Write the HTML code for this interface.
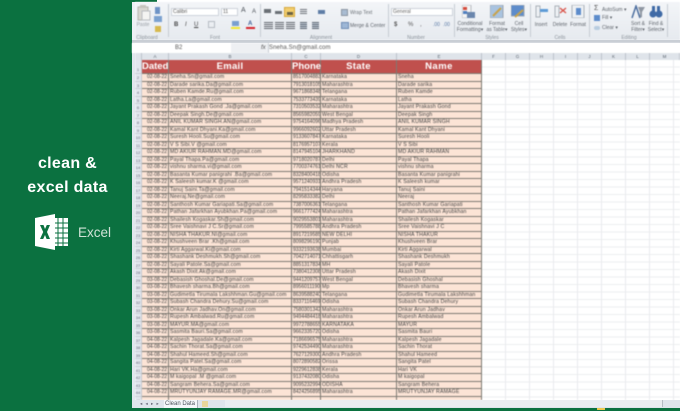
<!DOCTYPE html>
<html><head><meta charset="utf-8"><style>
html,body{margin:0;padding:0;background:#fff}
body{width:680px;height:411px;position:relative;overflow:hidden;font-family:"Liberation Sans",sans-serif}
.a{position:absolute;white-space:nowrap}
#left{left:0;top:0;width:132px;height:411px;background:#0b7140}
#rib{left:135px;top:2px;width:545px;height:38px;background:linear-gradient(#f3f5f8,#e6eaef);filter:blur(.4px)}
.t{position:absolute;white-space:nowrap;font-size:5px;color:#5f656c;line-height:6px}
.c{transform:translateX(-50%);text-align:center}
.g{color:#8d949c;font-size:5px;top:33px}
.sp{position:absolute;top:2px;height:33px;width:1px;background:#c6ccd3}
.ic{position:absolute}
.box{position:absolute;background:#fff;border:1px solid #cdd3da;box-sizing:border-box}
#sheet{left:135px;top:53px;width:545px;height:347px;filter:blur(.4px);overflow:hidden;background:#fff}
.r{position:absolute;left:0;width:545px;height:7.5px;font-size:5.2px;line-height:7px;color:#444;letter-spacing:.15px}
.r span{position:absolute;top:0;height:7.5px;white-space:nowrap;overflow:hidden;background:#fce4d6;box-sizing:border-box;border-right:1px solid #7d7a72;border-bottom:1px solid #7d7a72;padding-left:1px}
.r .n{left:0;width:7px;background:#e2e7ee;border-right:1px solid #c3c9d0;border-bottom:1px solid #c9ced5;color:#667;text-align:center;padding:0;font-size:4px;letter-spacing:0}
.r .d{left:7px;width:27px;text-align:right;padding:0 1px 0 0;font-size:5px;letter-spacing:0}
.r .e{left:34px;width:123px}
.r .p{left:157px;width:29px;font-size:5px;letter-spacing:0}
.r .s{left:186px;width:76px}
.r .m{left:262px;width:85px}
#grid{left:347px;top:7px;width:198px;height:340px;background:repeating-linear-gradient(90deg,transparent 0 23px,#e9ebee 23px 24px),repeating-linear-gradient(180deg,transparent 0 6.5px,#eceef0 6.5px 7.5px)}
.ch{position:absolute;top:0;height:7px;background:#dfe4ea;border-right:1px solid #bcc3cb;box-sizing:border-box;font-size:4.5px;color:#5c6670;text-align:center;line-height:7px}
.hd{position:absolute;top:7px;height:14px;background:#c0504d;color:#fff;font-weight:bold;font-size:9.5px;line-height:13px;text-align:center;box-sizing:border-box;border-right:1px solid #7d7a72;border-bottom:1px solid #7d7a72}
</style></head><body>

<div class="a" id="left"></div>
<div class="a" style="left:0;top:152px;width:135px;text-align:center;color:#fff;font-weight:bold;font-size:16px;line-height:24px;letter-spacing:.3px">clean &amp;<br>excel data</div>
<svg class="a" style="left:34px;top:213px" width="36" height="38" viewBox="0 0 36 38">
<path d="M1 5 L21 1 V37 L1 33 Z" fill="#fff"/>
<rect x="21" y="5" width="13" height="28" fill="#fff"/>
<path d="M24 5V33M29 5V33M21 10H34M21 15H34M21 20H34M21 25H34M21 30H34" stroke="#0b7140" stroke-width="1"/>
<path d="M6 12 H9.5 L11 16 L12.8 12 H16 L13 19 L16 26 H12.6 L11 22 L9.2 26 H6 L9.2 19 Z" fill="#0b7140"/>
</svg>
<div class="a" style="left:78px;top:223px;color:#cfe2d6;font-size:13.5px;line-height:20px">Excel</div>
<div class="a" style="left:132px;top:0;width:25px;height:2px;background:#0b7140"></div>
<div class="a" style="left:132px;top:2px;width:3px;height:51px;background:#eef1f5"></div>
<div class="a" style="left:132px;top:53px;width:3px;height:347px;background:#e2e7ee"></div>
<div class="a" style="left:132px;top:400px;width:3px;height:8px;background:#dfe5ec"></div>
<div class="a" style="left:132px;top:408px;width:548px;height:3px;background:#0b7140"></div>

<div class="a" id="rib">
<!-- clipboard -->
<svg class="ic" style="left:2px;top:3px" width="14" height="16"><rect x="1" y="2" width="10" height="13" fill="#d9d8d2" stroke="#b5b5ae"/><rect x="5" y="6" width="8" height="9" fill="#f4f4f2" stroke="#b9bcc0"/><rect x="3" y="0" width="6" height="3" fill="#c5c4bd"/></svg>
<div class="t c" style="left:8px;top:20px;color:#9aa0a6">Paste</div>
<div class="ic" style="left:20px;top:5px;width:5px;height:7px;background:#6d93c6"></div>
<div class="ic" style="left:19px;top:14px;width:8px;height:6px;background:#7ba1d0"></div>
<div class="ic" style="left:20px;top:24px;width:6px;height:6px;background:#d7b94e"></div>
<div class="t g c" style="left:12px">Clipboard</div>
<div class="sp" style="left:33px"></div>
<!-- font -->
<div class="box" style="left:36px;top:6px;width:48px;height:8px"></div>
<div class="t" style="left:38px;top:7px;color:#555">Calibri</div>
<div class="box" style="left:86px;top:6px;width:17px;height:8px"></div>
<div class="t" style="left:88px;top:7px;color:#555">11</div>
<div class="t" style="left:106px;top:6px;font-size:7px;color:#4b5058">A</div>
<div class="t" style="left:117px;top:7px;font-size:6px;color:#4b5058">A</div>
<div class="t" style="left:39px;top:20px;font-weight:bold;font-size:6px;color:#444">B</div>
<div class="t" style="left:50px;top:20px;font-style:italic;font-size:6px;color:#444">I</div>
<div class="t" style="left:59px;top:20px;text-decoration:underline;font-size:6px;color:#444">U</div>
<div class="ic" style="left:73px;top:19px;width:7px;height:7px;border:1px solid #b6bcc3;box-sizing:border-box"></div>
<div class="ic" style="left:97px;top:19px;width:7px;height:5px;background:#7b9fcf"></div>
<div class="ic" style="left:96px;top:25px;width:9px;height:2px;background:#f2e632"></div>
<div class="t" style="left:113px;top:19px;font-size:6px;font-weight:bold;color:#3b5c95">A</div>
<div class="ic" style="left:111px;top:25px;width:9px;height:2px;background:#d6232a"></div>
<div class="t g c" style="left:80px">Font</div>
<div class="sp" style="left:125px"></div>
<!-- alignment -->
<div class="ic" style="left:129px;top:7px;width:7px;height:4px;background:#6b7076"></div>
<div class="ic" style="left:140px;top:9px;width:7px;height:3px;background:#6b7076"></div>
<div class="ic" style="left:149px;top:5px;width:11px;height:10px;background:#f3ce6d;border:1px solid #d6a83c;box-sizing:border-box"></div>
<div class="ic" style="left:152px;top:10px;width:6px;height:3px;background:#6b6242"></div>
<div class="ic" style="left:165px;top:7px;width:7px;height:6px;background:repeating-linear-gradient(180deg,#70757c 0 1px,transparent 1px 2px)"></div>
<div class="ic" style="left:183px;top:8px;width:7px;height:4px;background:#5f7da6"></div>
<div class="ic" style="left:129px;top:20px;width:9px;height:7px;background:repeating-linear-gradient(180deg,#62676e 0 1px,transparent 1px 2px)"></div>
<div class="ic" style="left:140px;top:20px;width:9px;height:7px;background:repeating-linear-gradient(180deg,#62676e 0 1px,transparent 1px 2px)"></div>
<div class="ic" style="left:151px;top:20px;width:9px;height:7px;background:repeating-linear-gradient(180deg,#62676e 0 1px,transparent 1px 2px)"></div>
<div class="ic" style="left:165px;top:20px;width:7px;height:7px;background:repeating-linear-gradient(180deg,#5e6772 0 1px,#c6d1dd 1px 2px)"></div>
<div class="ic" style="left:177px;top:20px;width:7px;height:7px;background:repeating-linear-gradient(180deg,#5e6772 0 1px,#c6d1dd 1px 2px)"></div>
<div class="ic" style="left:206px;top:7px;width:7px;height:7px;background:#a9bcd2;border:1px solid #8c96a2;box-sizing:border-box"></div>
<div class="t" style="left:215px;top:8px;color:#6a7076">Wrap Text</div>
<div class="ic" style="left:206px;top:20px;width:8px;height:7px;background:#9db7d6;border:1px solid #6f8db5;box-sizing:border-box"></div>
<div class="t" style="left:215px;top:21px;color:#5f656c">Merge &amp; Center</div>
<div class="t g c" style="left:186px">Alignment</div>
<div class="sp" style="left:253px"></div>
<!-- number -->
<div class="box" style="left:256px;top:6px;width:62px;height:8px"></div>
<div class="t" style="left:258px;top:7px;color:#666">General</div>
<div class="t" style="left:259px;top:20px;font-size:6px;font-weight:bold;color:#555">$</div>
<div class="t" style="left:273px;top:20px;font-size:6px;color:#555">%</div>
<div class="t" style="left:285px;top:20px;font-size:6px;color:#555">,</div>
<div class="t" style="left:298px;top:20px;color:#5e7da8">.00</div>
<div class="t" style="left:308px;top:20px;color:#5e7da8">.00</div>
<div class="t g c" style="left:281px">Number</div>
<div class="sp" style="left:319px"></div>
<!-- styles -->
<svg class="ic" style="left:327px;top:3px" width="14" height="13"><rect width="9" height="13" fill="#f4f4f4" stroke="#b8bcc2"/><rect x="1" y="2" width="4" height="3" fill="#d44a3c"/><rect x="1" y="6" width="4" height="3" fill="#4f7fc0"/><rect x="5" y="7" width="8" height="6" fill="#6a86ad"/></svg>
<svg class="ic" style="left:355px;top:3px" width="14" height="13"><rect width="13" height="13" fill="#a9c3e0" stroke="#9aa5b2"/><path d="M3 11 L11 3" stroke="#c9a34a" stroke-width="2"/></svg>
<svg class="ic" style="left:376px;top:3px" width="14" height="13"><rect width="13" height="11" fill="#5d8ccb" stroke="#9aa5b2"/><path d="M4 12 L12 5" stroke="#c9a34a" stroke-width="2"/></svg>
<div class="t c" style="left:335px;top:20px;line-height:5.5px">Conditional<br>Formatting▾</div>
<div class="t c" style="left:362px;top:20px;line-height:5.5px">Format<br>as Table▾</div>
<div class="t c" style="left:384px;top:20px;line-height:5.5px">Cell<br>Styles▾</div>
<div class="t g c" style="left:357px">Styles</div>
<div class="sp" style="left:395px"></div>
<!-- cells -->
<svg class="ic" style="left:400px;top:3px" width="14" height="13"><rect x="1" y="1" width="4" height="11" fill="#eef1f4" stroke="#aab1b9"/><rect x="5" y="4" width="8" height="3" fill="#5d9bd6"/></svg>
<svg class="ic" style="left:419px;top:3px" width="14" height="13"><rect x="1" y="1" width="4" height="11" fill="#eef1f4" stroke="#aab1b9"/><path d="M6 3 L12 8 M12 3 L6 8" stroke="#d9534a" stroke-width="1.3"/></svg>
<svg class="ic" style="left:436px;top:3px" width="14" height="13"><rect x="1" y="0" width="12" height="13" fill="#eef1f4" stroke="#aab1b9"/><rect x="5" y="3" width="5" height="7" fill="#5d8ccb"/></svg>
<div class="t c" style="left:406px;top:20px">Insert</div>
<div class="t c" style="left:425px;top:20px">Delete</div>
<div class="t c" style="left:443px;top:20px">Format</div>
<div class="t g c" style="left:425px">Cells</div>
<div class="sp" style="left:454px"></div>
<!-- editing -->
<div class="t" style="left:459px;top:4px;font-size:7px;color:#555">Σ</div>
<div class="t" style="left:467px;top:5px">AutoSum ▾</div>
<div class="ic" style="left:459px;top:13px;width:6px;height:6px;background:#5d8ccb"></div>
<div class="t" style="left:467px;top:13px">Fill ▾</div>
<div class="ic" style="left:459px;top:24px;width:6px;height:4px;background:#b9cde0;border-radius:2px"></div>
<div class="t" style="left:467px;top:23px">Clear ▾</div>
<svg class="ic" style="left:496px;top:3px" width="15" height="14"><path d="M1 13 L5 1 L9 13" fill="none" stroke="#4d6fa0" stroke-width="1.5"/><path d="M7 2 H14 L11 7 V12 L9 13 V7 Z" fill="#8f97a2"/></svg>
<svg class="ic" style="left:514px;top:3px" width="14" height="14"><circle cx="4" cy="9" r="3.5" fill="#3f6aa6"/><circle cx="10" cy="9" r="3.5" fill="#3f6aa6"/><rect x="3" y="1" width="3" height="7" fill="#3f6aa6"/><rect x="8" y="1" width="3" height="7" fill="#3f6aa6"/></svg>
<div class="t c" style="left:503px;top:20px;line-height:5.5px">Sort &amp;<br>Filter▾</div>
<div class="t c" style="left:521px;top:20px;line-height:5.5px">Find &amp;<br>Select▾</div>
<div class="t g c" style="left:494px">Editing</div>
<div class="sp" style="left:532px"></div>
</div>
<div class="a" style="left:132px;top:40px;width:548px;height:3px;background:#c9ced5"></div>

<!-- formula bar -->
<div class="a" style="left:132px;top:43px;width:548px;height:10px;background:#fff;filter:blur(.4px)">
<div class="t" style="left:43px;top:2px;font-size:6px;color:#555">B2</div>
<div class="ic" style="left:99px;top:0;width:37px;height:10px;background:#eef0f3"></div>
<div class="t" style="left:129px;top:2px;font-size:6px;font-style:italic;color:#555">fx</div>
<div class="ic" style="left:136px;top:0;width:1px;height:10px;background:#c9ced5"></div>
<div class="t" style="left:137px;top:2px;font-size:6px;color:#555;letter-spacing:.1px">Sneha.Sn@gmail.com</div>
</div>

<!-- sheet -->
<div class="a" id="sheet">
<div class="a" id="grid"></div>
<div class="ch" style="left:0;width:7px"></div>
<div class="ch" style="left:7px;width:27px">A</div>
<div class="ch" style="left:34px;width:123px">B</div>
<div class="ch" style="left:157px;width:29px">C</div>
<div class="ch" style="left:186px;width:76px">D</div>
<div class="ch" style="left:262px;width:85px">E</div>
<div class="ch" style="left:347px;width:24px">F</div>
<div class="ch" style="left:371px;width:24px">G</div>
<div class="ch" style="left:395px;width:24px">H</div>
<div class="ch" style="left:419px;width:24px">I</div>
<div class="ch" style="left:443px;width:24px">J</div>
<div class="ch" style="left:467px;width:24px">K</div>
<div class="ch" style="left:491px;width:24px">L</div>
<div class="ch" style="left:515px;width:30px">M</div>
<div class="hd" style="left:0;width:7px;background:#e2e7ee;color:#667;font-size:4px;font-weight:normal;line-height:20px;border-right:1px solid #c3c9d0;border-bottom:1px solid #c9ced5">1</div>
<div class="hd" style="left:7px;width:27px">Dated</div>
<div class="hd" style="left:34px;width:123px;letter-spacing:.3px">Email</div>
<div class="hd" style="left:157px;width:29px">Phone</div>
<div class="hd" style="left:186px;width:76px;letter-spacing:.3px">State</div>
<div class="hd" style="left:262px;width:85px;letter-spacing:.5px">Name</div>

<div class="r" style="top:21px"><span class="n">2</span><span class="d">02-08-22</span><span class="e">Sneha.Sn@gmail.com</span><span class="p">8517004883</span><span class="s">Karnataka</span><span class="m">Sneha</span></div>
<div class="r" style="top:28.5px"><span class="n">3</span><span class="d">02-08-22</span><span class="e">Darade sarika.Da@gmail.com</span><span class="p">7913018105</span><span class="s">Maharashtra</span><span class="m">Darade sarika</span></div>
<div class="r" style="top:36px"><span class="n">4</span><span class="d">02-08-22</span><span class="e">Ruben Kamde.Ru@gmail.com</span><span class="p">9671868348</span><span class="s">Telangana</span><span class="m">Ruben Kamde</span></div>
<div class="r" style="top:43.5px"><span class="n">5</span><span class="d">02-08-22</span><span class="e">Latha.La@gmail.com</span><span class="p">7533773439</span><span class="s">Karnataka</span><span class="m">Latha</span></div>
<div class="r" style="top:51px"><span class="n">6</span><span class="d">02-08-22</span><span class="e">Jayant Prakash Gond .Ja@gmail.com</span><span class="p">7310503532</span><span class="s">Maharashtra</span><span class="m">Jayant Prakash Gond</span></div>
<div class="r" style="top:58.5px"><span class="n">7</span><span class="d">02-08-22</span><span class="e">Deepak Singh.De@gmail.com</span><span class="p">8565982059</span><span class="s">West Bengal</span><span class="m">Deepak Singh</span></div>
<div class="r" style="top:66px"><span class="n">8</span><span class="d">02-08-22</span><span class="e">ANIL KUMAR SINGH.AN@gmail.com</span><span class="p">9754164096</span><span class="s">Madhya Pradesh</span><span class="m">ANIL KUMAR SINGH</span></div>
<div class="r" style="top:73.5px"><span class="n">9</span><span class="d">02-08-22</span><span class="e">Kamal Kant Dhyani.Ka@gmail.com</span><span class="p">9966092602</span><span class="s">Uttar Pradesh</span><span class="m">Kamal Kant Dhyani</span></div>
<div class="r" style="top:81px"><span class="n">10</span><span class="d">02-08-22</span><span class="e">Suresh Hooli.Su@gmail.com</span><span class="p">9133607847</span><span class="s">Karnataka</span><span class="m">Suresh Hooli</span></div>
<div class="r" style="top:88.5px"><span class="n">11</span><span class="d">02-08-22</span><span class="e">V S Sibi.V @gmail.com</span><span class="p">8176957107</span><span class="s">Kerala</span><span class="m">V S Sibi</span></div>
<div class="r" style="top:96px"><span class="n">12</span><span class="d">02-08-22</span><span class="e">MD AKIUR RAHMAN.MD@gmail.com</span><span class="p">8147945104</span><span class="s">JHARKHAND</span><span class="m">MD AKIUR RAHMAN</span></div>
<div class="r" style="top:103.5px"><span class="n">13</span><span class="d">02-08-22</span><span class="e">Payal Thapa.Pa@gmail.com</span><span class="p">9718020787</span><span class="s">Delhi</span><span class="m">Payal Thapa</span></div>
<div class="r" style="top:111px"><span class="n">14</span><span class="d">02-08-22</span><span class="e">vishnu sharma.vi@gmail.com</span><span class="p">7700374761</span><span class="s">Delhi NCR</span><span class="m">vishnu sharma</span></div>
<div class="r" style="top:118.5px"><span class="n">15</span><span class="d">02-08-22</span><span class="e">Basanta Kumar panigrahi .Ba@gmail.com</span><span class="p">8328400418</span><span class="s">Odisha</span><span class="m">Basanta Kumar panigrahi</span></div>
<div class="r" style="top:126px"><span class="n">16</span><span class="d">02-08-22</span><span class="e">K Saleesh kumar.K @gmail.com</span><span class="p">9571240931</span><span class="s">Andhra Pradesh</span><span class="m">K Saleesh kumar</span></div>
<div class="r" style="top:133.5px"><span class="n">17</span><span class="d">02-08-22</span><span class="e">Tanuj Saini.Ta@gmail.com</span><span class="p">7941514344</span><span class="s">Haryana</span><span class="m">Tanuj Saini</span></div>
<div class="r" style="top:141px"><span class="n">18</span><span class="d">02-08-22</span><span class="e">Neeraj.Ne@gmail.com</span><span class="p">8295833382</span><span class="s">Delhi</span><span class="m">Neeraj</span></div>
<div class="r" style="top:148.5px"><span class="n">19</span><span class="d">02-08-22</span><span class="e">Santhosh Kumar Gariapati.Sa@gmail.com</span><span class="p">7387006361</span><span class="s">Telangana</span><span class="m">Santhosh Kumar Gariapati</span></div>
<div class="r" style="top:156px"><span class="n">20</span><span class="d">02-08-22</span><span class="e">Pathan Jafarkhan Ayubkhan.Pa@gmail.com</span><span class="p">9661777424</span><span class="s">Maharashtra</span><span class="m">Pathan Jafarkhan Ayubkhan</span></div>
<div class="r" style="top:163.5px"><span class="n">21</span><span class="d">02-08-22</span><span class="e">Shailesh Kogaskar.Sh@gmail.com</span><span class="p">9029553801</span><span class="s">Maharashtra</span><span class="m">Shailesh Kogaskar</span></div>
<div class="r" style="top:171px"><span class="n">22</span><span class="d">02-08-22</span><span class="e">Sree Vaishnavi J C.Sr@gmail.com</span><span class="p">7995585788</span><span class="s">Andhra Pradesh</span><span class="m">Sree Vaishnavi J C</span></div>
<div class="r" style="top:178.5px"><span class="n">23</span><span class="d">02-08-22</span><span class="e">NISHA THAKUR.NI@gmail.com</span><span class="p">8917219585</span><span class="s">NEW DELHI</span><span class="m">NISHA THAKUR</span></div>
<div class="r" style="top:186px"><span class="n">24</span><span class="d">02-08-22</span><span class="e">Khushveen Brar .Kh@gmail.com</span><span class="p">8098296190</span><span class="s">Punjab</span><span class="m">Khushveen Brar</span></div>
<div class="r" style="top:193.5px"><span class="n">25</span><span class="d">02-08-22</span><span class="e">Kirti Aggarwal.Ki@gmail.com</span><span class="p">9332193638</span><span class="s">Mumbai</span><span class="m">Kirti Aggarwal</span></div>
<div class="r" style="top:201px"><span class="n">26</span><span class="d">02-08-22</span><span class="e">Shashank Deshmukh.Sh@gmail.com</span><span class="p">7042714071</span><span class="s">Chhattisgarh</span><span class="m">Shashank Deshmukh</span></div>
<div class="r" style="top:208.5px"><span class="n">27</span><span class="d">02-08-22</span><span class="e">Sayali Patole.Sa@gmail.com</span><span class="p">8851317834</span><span class="s">MH</span><span class="m">Sayali Patole</span></div>
<div class="r" style="top:216px"><span class="n">28</span><span class="d">02-08-22</span><span class="e">Akash Dixit.Ak@gmail.com</span><span class="p">7380412308</span><span class="s">Uttar Pradesh</span><span class="m">Akash Dixit</span></div>
<div class="r" style="top:223.5px"><span class="n">29</span><span class="d">03-08-22</span><span class="e">Debasish Ghoshal.De@gmail.com</span><span class="p">9441209757</span><span class="s">West Bengal</span><span class="m">Debasish Ghoshal</span></div>
<div class="r" style="top:231px"><span class="n">30</span><span class="d">03-08-22</span><span class="e">Bhavesh sharma.Bh@gmail.com</span><span class="p">8956011190</span><span class="s">Mp</span><span class="m">Bhavesh sharma</span></div>
<div class="r" style="top:238.5px"><span class="n">31</span><span class="d">03-08-22</span><span class="e">Gudimetla Tirumala Lakshhman.Gu@gmail.com</span><span class="p">8639588240</span><span class="s">Telangana</span><span class="m">Gudimetla Tirumala Lakshhman</span></div>
<div class="r" style="top:246px"><span class="n">32</span><span class="d">03-08-22</span><span class="e">Subash Chandra Dehury.Su@gmail.com</span><span class="p">8337116469</span><span class="s">Odisha</span><span class="m">Subash Chandra Dehury</span></div>
<div class="r" style="top:253.5px"><span class="n">33</span><span class="d">03-08-22</span><span class="e">Onkar Arun Jadhav.On@gmail.com</span><span class="p">7580301342</span><span class="s">Maharashtra</span><span class="m">Onkar Arun Jadhav</span></div>
<div class="r" style="top:261px"><span class="n">34</span><span class="d">03-08-22</span><span class="e">Rupesh Ambalwad.Ru@gmail.com</span><span class="p">9494484418</span><span class="s">Maharashtra</span><span class="m">Rupesh Ambalwad</span></div>
<div class="r" style="top:268.5px"><span class="n">35</span><span class="d">03-08-22</span><span class="e">MAYUR.MA@gmail.com</span><span class="p">9972788655</span><span class="s">KARNATAKA</span><span class="m">MAYUR</span></div>
<div class="r" style="top:276px"><span class="n">36</span><span class="d">03-08-22</span><span class="e">Sasmita Bauri.Sa@gmail.com</span><span class="p">9662335720</span><span class="s">Odisha</span><span class="m">Sasmita Bauri</span></div>
<div class="r" style="top:283.5px"><span class="n">37</span><span class="d">04-08-22</span><span class="e">Kalpesh Jagadale.Ka@gmail.com</span><span class="p">7186696575</span><span class="s">Maharashtra</span><span class="m">Kalpesh Jagadale</span></div>
<div class="r" style="top:291px"><span class="n">38</span><span class="d">04-08-22</span><span class="e">Sachin Thorat.Sa@gmail.com</span><span class="p">9742534490</span><span class="s">Maharashtra</span><span class="m">Sachin Thorat</span></div>
<div class="r" style="top:298.5px"><span class="n">39</span><span class="d">04-08-22</span><span class="e">Shahul Hameed.Sh@gmail.com</span><span class="p">7627129300</span><span class="s">Andhra Pradesh</span><span class="m">Shahul Hameed</span></div>
<div class="r" style="top:306px"><span class="n">40</span><span class="d">04-08-22</span><span class="e">Sangita Patel.Sa@gmail.com</span><span class="p">8072890582</span><span class="s">Orissa</span><span class="m">Sangita Patel</span></div>
<div class="r" style="top:313.5px"><span class="n">41</span><span class="d">04-08-22</span><span class="e">Hari VK.Ha@gmail.com</span><span class="p">9229612838</span><span class="s">Kerala</span><span class="m">Hari VK</span></div>
<div class="r" style="top:321px"><span class="n">42</span><span class="d">04-08-22</span><span class="e">M kaigopal .M @gmail.com</span><span class="p">9137432080</span><span class="s">Odisha</span><span class="m">M kaigopal</span></div>
<div class="r" style="top:328.5px"><span class="n">43</span><span class="d">04-08-22</span><span class="e">Sangram Behera.Sa@gmail.com</span><span class="p">9095232994</span><span class="s">ODISHA</span><span class="m">Sangram Behera</span></div>
<div class="r" style="top:336px"><span class="n">44</span><span class="d">04-08-22</span><span class="e">MRUTYUNJAY RAMAGE.MR@gmail.com</span><span class="p">8424256895</span><span class="s">Maharashtra</span><span class="m">MRUTYUNJAY RAMAGE</span></div>
<div class="r" style="top:343.5px"><span class="n">45</span><span class="d"></span><span class="e"></span><span class="p"></span><span class="s"></span><span class="m"></span></div>
</div>

<!-- tab bar -->
<div class="a" style="left:135px;top:400px;width:545px;height:8px;background:#dfe5ec;filter:blur(.3px)">
<div class="t" style="left:5px;top:1px;font-size:4.5px;color:#667;letter-spacing:1px">◂ ◂ ▸ ▸</div>
<div class="ic" style="left:29px;top:0;width:33px;height:8px;background:#f4f7fa;border-right:1px solid #a9b1ba"></div>
<div class="t" style="left:30px;top:1px;font-size:6px;color:#4c545c">Clean Data</div>
<div class="ic" style="left:67px;top:1px;width:6px;height:6px;background:#e9d79b"></div>
<div class="ic" style="left:90px;top:0;width:438px;height:7px;background:#e9edf1;border-right:1px solid #b5bcc4;box-sizing:border-box"></div>
<div class="ic" style="left:462px;top:8px;width:8px;height:2px;background:#ecc94d"></div>
</div>
</body></html>
